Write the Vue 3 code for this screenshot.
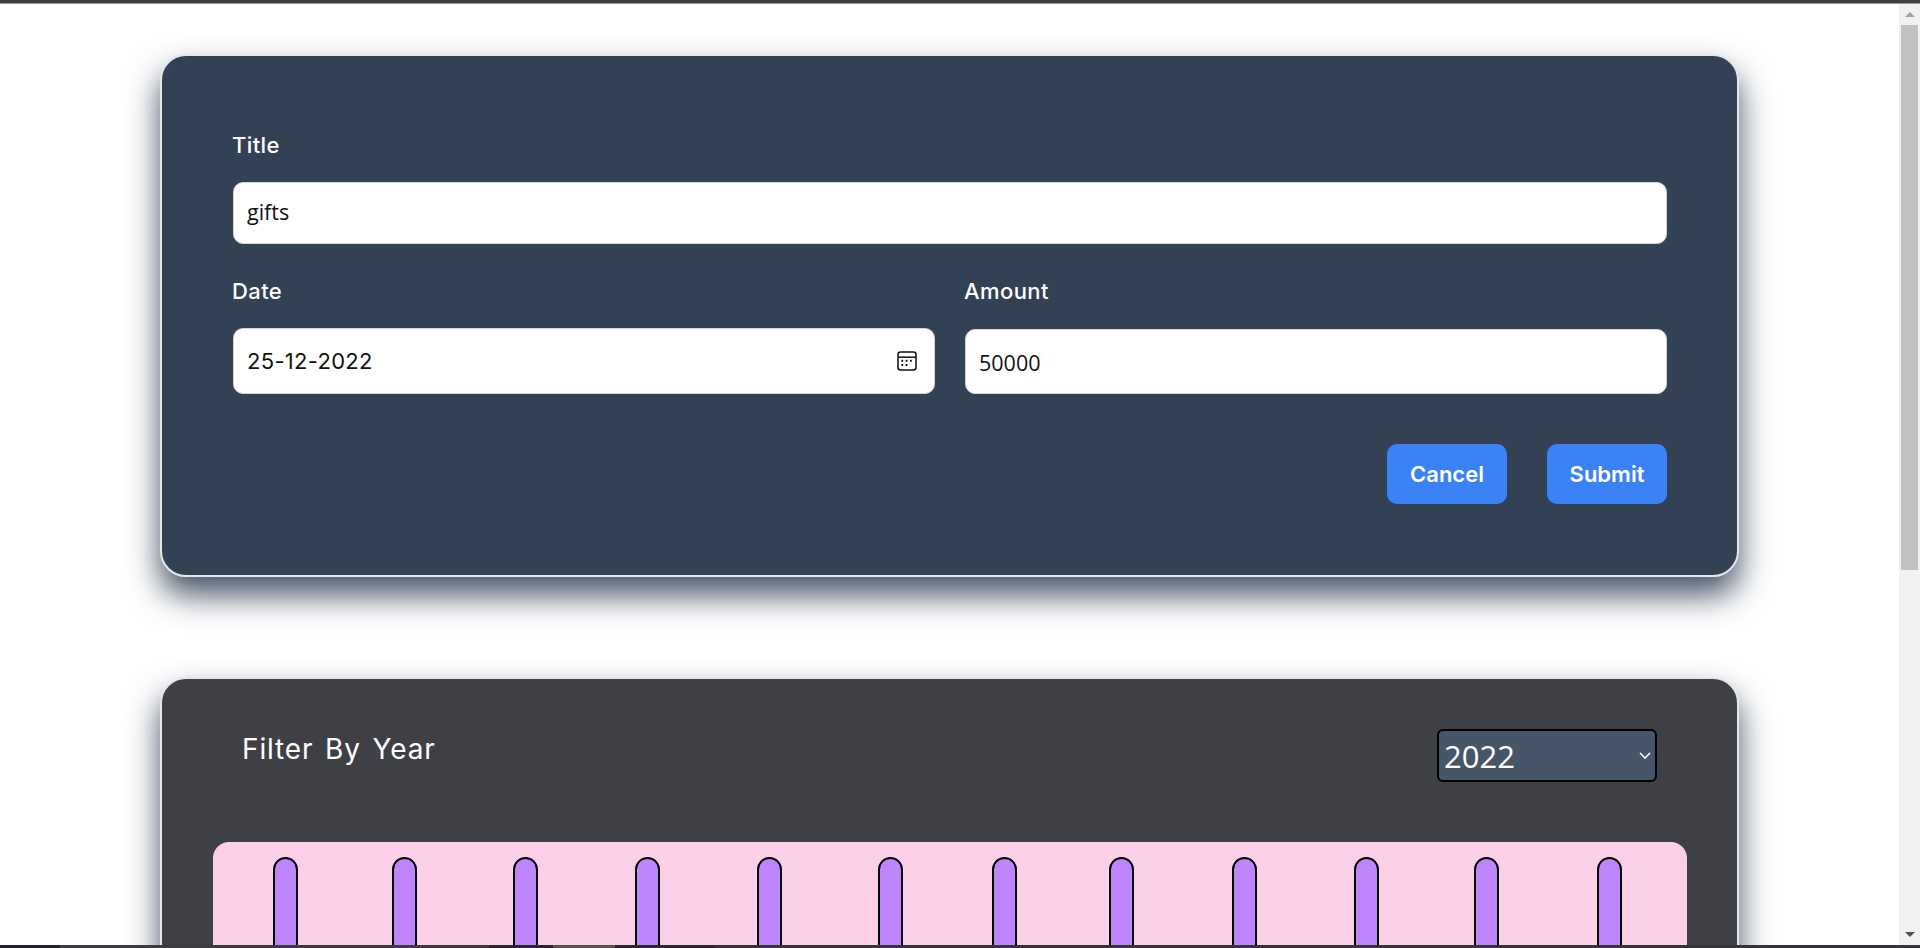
<script setup>
// slot widths keep the bars at the uneven spacing they have in the chart
const months = [
  { name: "Jan", width: 35 },
  { name: "Feb", width: 32 },
  { name: "Mar", width: 38 },
  { name: "Apr", width: 33 },
  { name: "May", width: 40 },
  { name: "Jun", width: 31 },
  { name: "Jul", width: 25 },
  { name: "Aug", width: 36 },
  { name: "Sep", width: 39 },
  { name: "Oct", width: 32 },
  { name: "Nov", width: 37 },
  { name: "Dec", width: 38 },
];
</script>

<template>
  <div class="screen">
    <div class="top-strip"></div>
    <div class="window">
      <main class="page">
        <form class="card form-card" @submit.prevent>
          <div class="field full title-field">
            <label>Title</label>
            <input class="text-input title-input" type="text" value="gifts" />
          </div>
          <div class="field">
            <label>Date</label>
            <div class="date-input">
              <input type="text" value="25-12-2022" />
              <svg viewBox="0 0 20 20" width="20" height="20" fill="none" stroke="#111" stroke-width="1.5">
                <rect x="1" y="1" width="18" height="18" rx="2.5" />
                <path d="M1 6.2h18" />
                <path d="M4.4 9.8h1.8M8.7 9.8h1.8M13 9.8h1.8M4.4 14h1.8M8.7 14h1.8" stroke-width="2" />
              </svg>
            </div>
          </div>
          <div class="field">
            <label>Amount</label>
            <input class="text-input amount-input" type="text" value="50000" />
          </div>
          <div class="actions full">
            <button type="button">Cancel</button>
            <button type="submit">Submit</button>
          </div>
        </form>

        <section class="card filter-card">
          <div class="filter-head">
            <h2>Filter By Year</h2>
            <div class="select-wrap">
              <select>
                <option>2022</option>
                <option>2021</option>
                <option>2020</option>
              </select>
              <svg viewBox="0 0 12 7" width="12" height="7" fill="none" stroke="#fff" stroke-width="1.6">
                <path d="M1 1l5 5 5-5" />
              </svg>
            </div>
          </div>
          <div class="chart">
            <div
              class="month"
              v-for="month in months"
              :key="month.name"
              :title="month.name"
              :style="{ width: month.width + 'px' }"
            >
              <div class="bar"></div>
            </div>
          </div>
        </section>
      </main>
      <aside class="scrollbar">
        <div class="arrow up"></div>
        <div class="thumb"></div>
        <div class="arrow down"></div>
      </aside>
    </div>
    <div class="bottom-strip">
      <i class="seg-a"></i>
      <i class="seg-b"></i>
      <i class="seg-c"></i>
      <i class="seg-d"></i>
      <i class="seg-e"></i>
    </div>
  </div>
</template>

<style>
html,
body {
  margin: 0;
  overflow: hidden;
}
</style>

<style scoped>
.screen {
  height: 948px;
  display: flex;
  flex-direction: column;
  background: #fff;
  font-family: Inter, Lato, sans-serif;
  color: #fff;
}
.top-strip {
  position: relative;
  z-index: 1;
  height: 3px;
  background: #404040;
  box-shadow: 0 1px 0 #9a9a9a;
}
.window {
  flex: 1;
  display: flex;
  min-height: 0;
}
.page {
  flex: 1;
  min-width: 0;
  overflow: hidden;
  padding: 51px 160px 0 160px;
}
.card {
  box-sizing: border-box;
  border: 2px solid #e5e7eb;
  border-radius: 26px;
  box-shadow: 0 18px 32px 0 #334155e6;
}
.form-card {
  height: 523px;
  margin-bottom: 100px;
  padding: 74px 70px 0 71px;
  background: #334155;
  display: grid;
  grid-template-columns: 1fr 1fr;
  column-gap: 30px;
  align-content: start;
}
.full {
  grid-column: 1 / 3;
}
.field {
  display: flex;
  flex-direction: column;
  justify-content: space-between;
}
.title-field {
  margin-bottom: 32px;
}
.field label {
  font-size: 22px;
  font-weight: 500;
  line-height: 30px;
  letter-spacing: 0.4px;
  margin-bottom: 22px;
  margin-left: -1px;
}
.text-input,
.date-input {
  box-sizing: border-box;
  background: #fff;
  border: 1px solid #d1d5db;
  border-radius: 10px;
  color: #111;
}
.text-input {
  font-family: "Open Sans", sans-serif;
  font-size: 21.5px;
  padding: 0 13px;
  outline: none;
}
.title-input {
  height: 62px;
  padding-bottom: 3px;
}
.amount-input {
  height: 65px;
  padding-top: 2px;
}
.date-input {
  height: 66px;
  display: flex;
  align-items: center;
  padding-right: 17px;
}
.date-input input {
  flex: 1;
  min-width: 0;
  border: 0;
  outline: none;
  background: transparent;
  padding: 0 13px;
  font: inherit;
  font-size: 22px;
  letter-spacing: 0.3px;
  color: #111;
}
.actions {
  display: flex;
  justify-content: flex-end;
  gap: 40px;
  margin-top: 50px;
}
.actions button {
  width: 120px;
  height: 60px;
  border: 0;
  border-radius: 10px;
  background: #3b82f6;
  color: #fff;
  font-family: inherit;
  font-size: 22px;
  font-weight: 600;
}
.filter-card {
  height: 700px;
  padding: 0 50px 0 51px;
  background: #3f3f46;
}
.filter-head {
  display: flex;
  align-items: flex-start;
  justify-content: space-between;
  height: 163px;
  padding: 50px 30px 0 29px;
  box-sizing: border-box;
}
.filter-head h2 {
  margin: 1px 0 0;
  font-size: 28px;
  font-weight: 400;
  line-height: 38px;
  letter-spacing: 0.85px;
  word-spacing: 3px;
}
.select-wrap {
  position: relative;
  width: 220px;
  height: 53px;
}
.select-wrap select {
  appearance: none;
  box-sizing: border-box;
  width: 100%;
  height: 100%;
  border: 2px solid #000;
  border-radius: 6px;
  background: #475569;
  color: #fff;
  font-family: "Open Sans", sans-serif;
  font-size: 31px;
  padding: 0 5px;
  outline: none;
}
.select-wrap svg {
  position: absolute;
  right: 6px;
  top: 23px;
}
.chart {
  box-sizing: border-box;
  height: 500px;
  padding: 15px 15px 0 12px;
  background: #fbcfe8;
  border-radius: 16px;
  display: flex;
  justify-content: space-around;
}
.month {
  display: flex;
  flex-direction: column;
  align-items: center;
}
.bar {
  box-sizing: border-box;
  flex: none;
  width: 25px;
  height: 300px;
  border: 2px solid #000;
  border-radius: 13px;
  background: #c084fc;
}
.scrollbar {
  width: 21px;
  background: #f1f1f1;
  display: flex;
  flex-direction: column;
}
.thumb {
  height: 545px;
  margin: 0 2px;
  background: #c1c1c1;
}
.arrow {
  height: 22px;
  display: flex;
  align-items: center;
  justify-content: center;
}
.arrow.down {
  margin-top: auto;
}
.arrow::after {
  content: "";
  border-left: 5px solid transparent;
  border-right: 5px solid transparent;
}
.arrow.up::after {
  border-bottom: 5px solid #a3a3a3;
}
.arrow.down::after {
  border-top: 5px solid #505050;
}
.bottom-strip {
  height: 3px;
  background: #34343a;
  display: flex;
}
.bottom-strip i {
  display: block;
}
.seg-a {
  width: 60px;
  background: #24242e;
}
.seg-b {
  width: 429px;
  background: #3c3c40;
}
.seg-c {
  width: 64px;
  background: #2c2630;
}
.seg-d {
  width: 62px;
  background: #555;
}
.seg-e {
  width: 100px;
  background: #2c2630;
}
</style>
